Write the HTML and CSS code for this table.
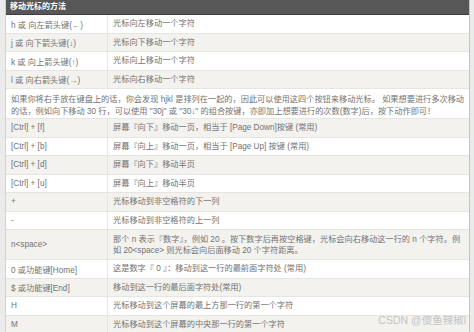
FILE: index.html
```html
<!DOCTYPE html>
<html lang="zh">
<head>
<meta charset="utf-8">
<link rel="stylesheet" href="styles.css">
</head>
<body>
<div class="wrap">
  <div class="head">移动光标的方法</div>
  <div class="row"><div class="k">h 或 向左箭头键(←)</div><div class="v">光标向左移动一个字符</div></div>
  <div class="row alt"><div class="k">j 或 向下箭头键(↓)</div><div class="v">光标向下移动一个字符</div></div>
  <div class="row"><div class="k">k 或 向上箭头键(↑)</div><div class="v">光标向上移动一个字符</div></div>
  <div class="row alt"><div class="k">l 或 向右箭头键(→)</div><div class="v">光标向右移动一个字符</div></div>
  <div class="row tall span"><div class="p">如果你将右手放在键盘上的话，你会发现 hjkl 是排列在一起的，因此可以使用这四个按钮来移动光标。 如果想要进行多次移动<br>的话，例如向下移动 30 行，可以使用 "30j" 或 "30↓" 的组合按键，亦即加上想要进行的次数(数字)后，按下动作即可！</div></div>
  <div class="row alt"><div class="k">[Ctrl] + [f]</div><div class="v">屏幕『向下』移动一页，相当于 [Page Down]按键 (常用)</div></div>
  <div class="row"><div class="k">[Ctrl] + [b]</div><div class="v">屏幕『向上』移动一页，相当于 [Page Up] 按键 (常用)</div></div>
  <div class="row alt"><div class="k">[Ctrl] + [d]</div><div class="v">屏幕『向下』移动半页</div></div>
  <div class="row"><div class="k">[Ctrl] + [u]</div><div class="v">屏幕『向上』移动半页</div></div>
  <div class="row alt"><div class="k">+</div><div class="v">光标移动到非空格符的下一列</div></div>
  <div class="row"><div class="k">-</div><div class="v">光标移动到非空格符的上一列</div></div>
  <div class="row alt tall"><div class="k">n&lt;space&gt;</div><div class="v">那个 n 表示『数字』，例如 20 。按下数字后再按空格键，光标会向右移动这一行的 n 个字符。例<br>如 20&lt;space&gt; 则光标会向后面移动 20 个字符距离。</div></div>
  <div class="row"><div class="k">0 或功能键[Home]</div><div class="v">这是数字『 0 』：移动到这一行的最前面字符处 (常用)</div></div>
  <div class="row alt"><div class="k">$ 或功能键[End]</div><div class="v">移动到这一行的最后面字符处(常用)</div></div>
  <div class="row"><div class="k">H</div><div class="v">光标移动到这个屏幕的最上方那一行的第一个字符</div></div>
  <div class="row alt"><div class="k">M</div><div class="v">光标移动到这个屏幕的中央那一行的第一个字符</div></div>
</div>
<div class="mark">CSDN @傻鱼辣椒l</div>
</body>
</html>
```

FILE: styles.css
```css
html, body {
  margin: 0;
  padding: 0;
  height: 100%;
  overflow: hidden;
}
body {
  background: #ebebeb;
  font-family: "Liberation Sans", "Noto Sans CJK SC", sans-serif;
  font-size: 8.2px;
  color: #727272;
  position: relative;
}
.wrap {
  margin: 0 4px 0 5px;
  border-left: 1px solid #d2d2d2;
  border-right: 1px solid #c4c4c4;
  background: #fff;
  min-height: 100%;
}
.head {
  height: 15px;
  box-sizing: border-box;
  background: #575757;
  border-bottom: 1px solid #3e3e3e;
  color: #fff;
  font-weight: bold;
  padding: 0 0 0 4px;
  line-height: 14px;
  font-size: 8px;
}
.row {
  display: grid;
  grid-template-columns: 102px 1fr;
  height: 18.5px;
  box-sizing: border-box;
  border-bottom: 1px solid #e6e5e1;
  background: #fff;
}
.row.alt {
  background: #f3f2ef;
}
.row.tall {
  height: 30px;
}
.row.span {
  display: block;
}
.k, .v {
  display: flex;
  align-items: center;
  padding-left: 5px;
}
.k {
  border-right: 1px solid #e6e5e1;
}
.v {
  padding-left: 5px;
  line-height: 11px;
}
.p {
  padding: 5px 0 0 5px;
  line-height: 12px;
  white-space: nowrap;
}
.mark {
  position: absolute;
  right: 8px;
  bottom: 5px;
  font-size: 10.5px;
  color: #c4c4c4;
  font-family: "Liberation Sans", "Noto Sans CJK SC", sans-serif;
}
```
